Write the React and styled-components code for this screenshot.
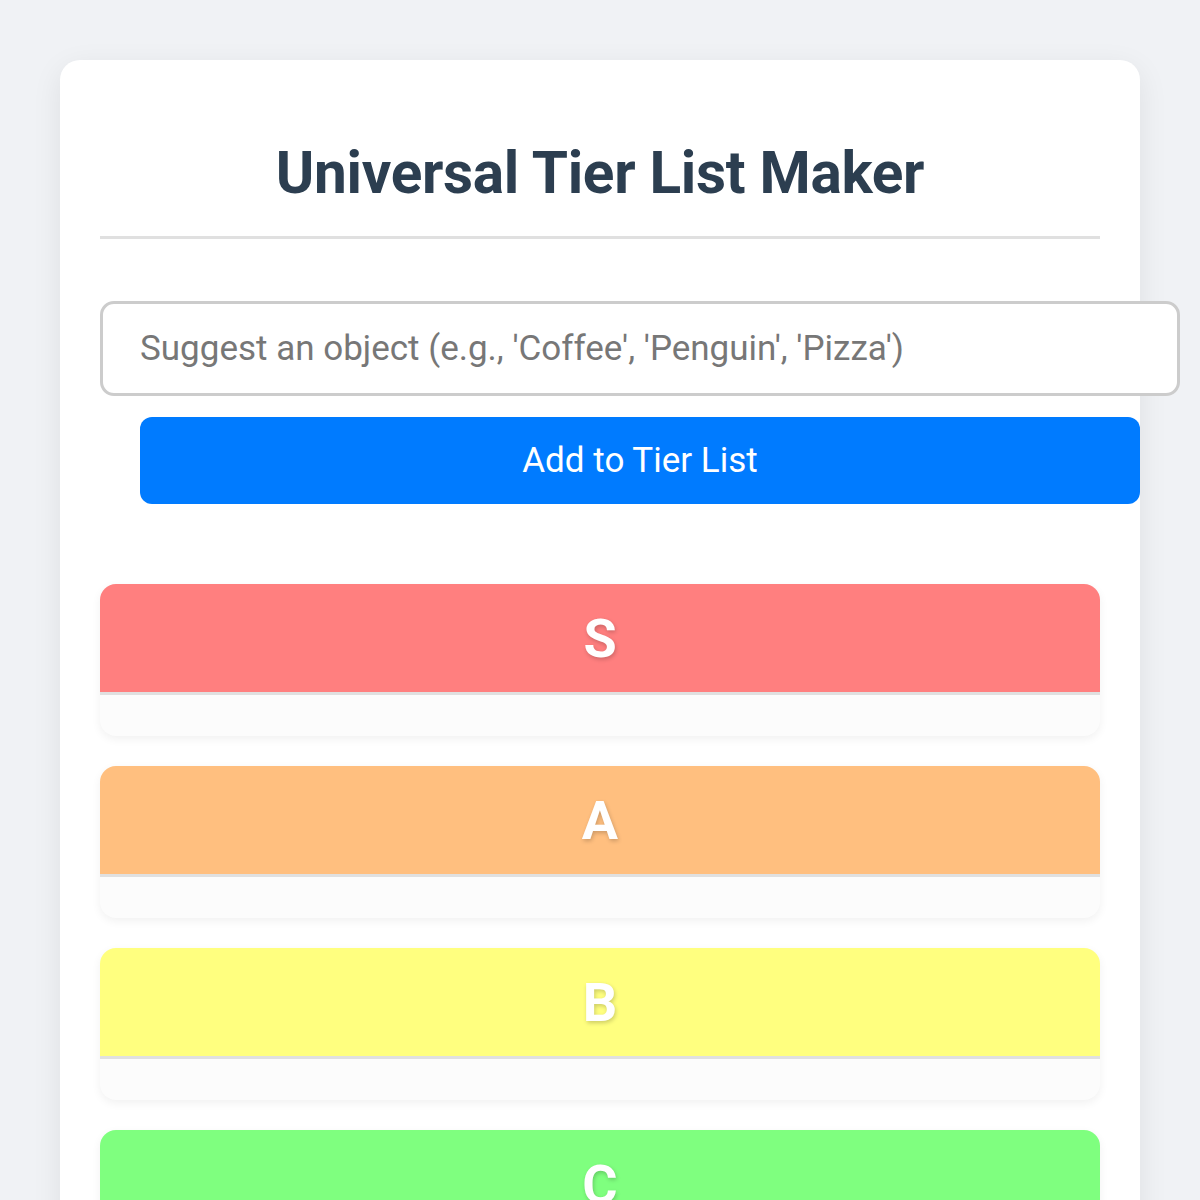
import React, { useState } from 'react';
import styled, { createGlobalStyle } from 'styled-components';

const GlobalStyle = createGlobalStyle`
  body {
    margin: 0;
    background: #f0f2f5;
    font-family: Roboto, "Liberation Sans", sans-serif;
  }
`;

const tiers = [
  { label: 'S', color: '#ff7f7f' },
  { label: 'A', color: '#ffbf7f' },
  { label: 'B', color: '#ffff7f' },
  { label: 'C', color: '#7fff7f' },
  { label: 'D', color: '#7fbfff' },
  { label: 'F', color: '#bf7fff' },
];

function App() {
  const [text, setText] = useState('');
  const [items, setItems] = useState({});

  const handleAdd = () => {
    if (!text.trim()) return;
    setItems({ ...items, S: [...(items.S || []), text.trim()] });
    setText('');
  };

  return (
    <Page>
      <GlobalStyle />
      <Card>
        <Title>Universal Tier List Maker</Title>
        <Form>
          <Input
            type="text"
            placeholder="Suggest an object (e.g., 'Coffee', 'Penguin', 'Pizza')"
            value={text}
            onChange={(e) => setText(e.target.value)}
          />
          <AddButton onClick={handleAdd}>Add to Tier List</AddButton>
        </Form>
        <TierList>
          {tiers.map((t) => (
            <Tier key={t.label}>
              <TierHeader color={t.color}>{t.label}</TierHeader>
              <TierItems>
                {(items[t.label] || []).map((it, i) => (
                  <Item key={i}>{it}</Item>
                ))}
              </TierItems>
            </Tier>
          ))}
        </TierList>
      </Card>
    </Page>
  );
}

const Page = styled.div`
  padding: 60px;
`;

const Card = styled.div`
  background: #fff;
  border-radius: 20px;
  padding: 40px;
  box-shadow: 0 8px 30px rgba(0, 0, 0, 0.08);
`;

const Title = styled.h1`
  margin: 0 0 62px;
  padding: 38px 0 28px;
  text-align: center;
  font-size: 58.5px;
  font-weight: 700;
  color: #2c3e50;
  line-height: 1.2;
  border-bottom: 3px solid #e0e0e0;
  letter-spacing: -0.3px;
`;

const Form = styled.div`
  display: flex;
  flex-direction: column;
  gap: 21px;
  margin-bottom: 80px;
`;

const Input = styled.input`
  width: calc(100% + 80px);
  box-sizing: border-box;
  height: 95px;
  padding: 0 37px;
  border: 3px solid #cccccc;
  border-radius: 14px;
  font-family: Roboto, "Liberation Sans", sans-serif;
  font-size: 35px;
  color: #333;
  outline: none;

  &::placeholder {
    color: #777;
  }
`;

const AddButton = styled.button`
  width: 100%;
  margin-left: 40px;
  height: 87px;
  border: none;
  border-radius: 12px;
  background: #007bff;
  color: #fff;
  font-family: Roboto, "Liberation Sans", sans-serif;
  font-size: 35px;
  cursor: pointer;
`;

const TierList = styled.div`
  display: flex;
  flex-direction: column;
  gap: 30px;
`;

const Tier = styled.div`
  border-radius: 16px;
  overflow: hidden;
  background: #fcfcfc;
  box-shadow: 0 3px 10px rgba(0, 0, 0, 0.06);
`;

const TierHeader = styled.div`
  height: 108px;
  display: flex;
  align-items: center;
  justify-content: center;
  background: ${(p) => p.color};
  border-bottom: 3px solid #e0e0e0;
  color: #fff;
  font-size: 54px;
  font-weight: 700;
  text-shadow: 1px 2px 4px rgba(0, 0, 0, 0.2);
`;

const TierItems = styled.div`
  min-height: 41px;
  display: flex;
  flex-wrap: wrap;
  gap: 10px;
`;

const Item = styled.div`
  padding: 8px 16px;
  background: #fff;
  border-radius: 8px;
  font-size: 24px;
`;

export default App;
